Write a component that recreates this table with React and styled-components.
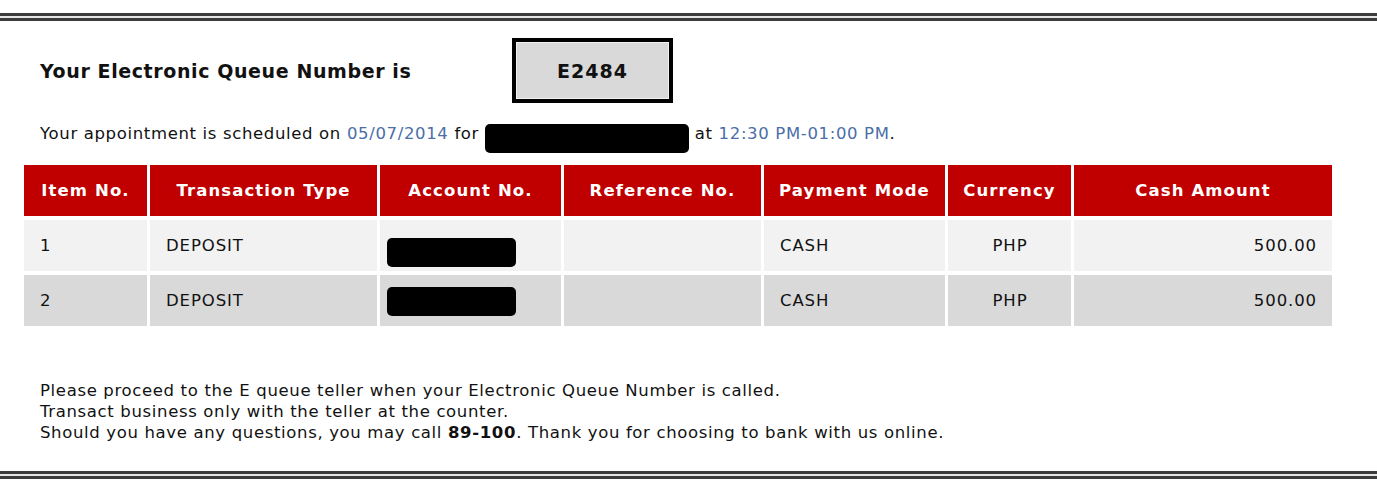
import React from 'react'
import styled, { createGlobalStyle } from 'styled-components'

const GlobalStyle = createGlobalStyle`
    body {
        margin: 0;
        background: #ffffff;
        font-family: "DejaVu Sans", Verdana, sans-serif;
        color: #111111;
    }
`

// the account numbers are blacked out a little off-centre in the screenshot
const rows = [
    { item: '1', type: 'DEPOSIT', mode: 'CASH', currency: 'PHP', amount: '500.00', drop: 13 },
    { item: '2', type: 'DEPOSIT', mode: 'CASH', currency: 'PHP', amount: '500.00', drop: 2 },
]

const columns = [
    { label: 'Item No.', width: 123 },
    { label: 'Transaction Type', width: 227 },
    { label: 'Account No.', width: 181 },
    { label: 'Reference No.', width: 197 },
    { label: 'Payment Mode', width: 181 },
    { label: 'Currency', width: 123 },
    { label: 'Cash Amount', width: 258 },
]

const App = () => {
    return (
        <Page>
            <GlobalStyle />
            <Rule />
            <QueueRow>
                <QueueTitle>Your Electronic Queue Number is</QueueTitle>
                <QueueBox>E2484</QueueBox>
            </QueueRow>
            <Appointment>
                Your appointment is scheduled on <Info>05/07/2014</Info> for <InlineRedacted /> at <Info>12:30 PM-01:00 PM</Info>.
            </Appointment>
            <Table>
                <colgroup>
                    {columns.map(c => <col key={c.label} style={{ width: c.width }} />)}
                </colgroup>
                <thead>
                    <tr>
                        {columns.map(c => <Th key={c.label}>{c.label}</Th>)}
                    </tr>
                </thead>
                <tbody>
                    {rows.map((r, i) => (
                        <Tr key={r.item} $alt={i % 2 === 1}>
                            <Td>{r.item}</Td>
                            <Td>{r.type}</Td>
                            <Td $pad={7}><CellRedacted $drop={r.drop} /></Td>
                            <Td></Td>
                            <Td>{r.mode}</Td>
                            <Td $align="center">{r.currency}</Td>
                            <Td $align="right">{r.amount}</Td>
                        </Tr>
                    ))}
                </tbody>
            </Table>
            <Notes>
                Please proceed to the E queue teller when your Electronic Queue Number is called.<br />
                Transact business only with the teller at the counter.<br />
                Should you have any questions, you may call <b>89-100</b>. Thank you for choosing to bank with us online.
            </Notes>
            <Rule $bottom />
        </Page>
    )
}

const Page = styled.div`
    width: 1377px;
    height: 481px;
    box-sizing: border-box;
    padding-bottom: 2px;
    overflow: hidden;
    display: flex;
    flex-direction: column;
`

const Rule = styled.div`
    flex: none;
    height: 2px;
    background: #e6e6e6;
    border-top: 3px solid #3c3c3c;
    border-bottom: 3px solid #3c3c3c;
    margin-top: ${p => (p.$bottom ? 'auto' : '13px')};
`

const QueueRow = styled.div`
    display: flex;
    align-items: center;
    padding-left: 40px;
    margin-top: 17px;
`

const QueueTitle = styled.h1`
    width: 472px;
    margin: 0;
    font-size: 19px;
    letter-spacing: 0.6px;
    font-weight: bold;
`

const QueueBox = styled.div`
    width: 153px;
    height: 57px;
    border: 4px solid #000000;
    box-shadow: inset 0 0 0 1px #f2f2f2;
    background: #d9d9d9;
    display: flex;
    align-items: center;
    justify-content: center;
    font-size: 19px;
    letter-spacing: 1px;
    font-weight: bold;
`

const Appointment = styled.p`
    margin: 21px 0 0 40px;
    font-size: 16.5px;
    letter-spacing: 0.65px;
    line-height: 20px;
`

const Info = styled.span`
    color: #4a6ea8;
`

const Redacted = styled.span`
    display: inline-block;
    background: #000000;
    border-radius: 5px;
`

const InlineRedacted = styled(Redacted)`
    width: 204px;
    height: 29px;
    vertical-align: -14px;
`

const CellRedacted = styled(Redacted)`
    width: 129px;
    height: 29px;
    vertical-align: middle;
    margin-top: ${p => p.$drop}px;
`

const Table = styled.table`
    margin: 8px 0 0 21px;
    width: 1314px;
    table-layout: fixed;
    border-collapse: separate;
    border-spacing: 3px 4px;
    font-size: 16.5px;
`

const Th = styled.th`
    height: 51px;
    padding: 0;
    background: #c00000;
    color: #ffffff;
    font-weight: bold;
    letter-spacing: 1.1px;
    text-align: center;
    white-space: nowrap;
`

const Tr = styled.tr`
    background: ${p => (p.$alt ? '#d9d9d9' : '#f2f2f2')};
`

const Td = styled.td`
    height: 51px;
    padding: 0 15px 0 ${p => (p.$pad != null ? p.$pad : 16)}px;
    text-align: ${p => p.$align || 'left'};
    letter-spacing: 0.9px;
    vertical-align: middle;
    box-sizing: border-box;
`

const Notes = styled.p`
    margin: 50px 0 0 40px;
    font-size: 16.5px;
    letter-spacing: 0.65px;
    line-height: 21px;
`

export default App
